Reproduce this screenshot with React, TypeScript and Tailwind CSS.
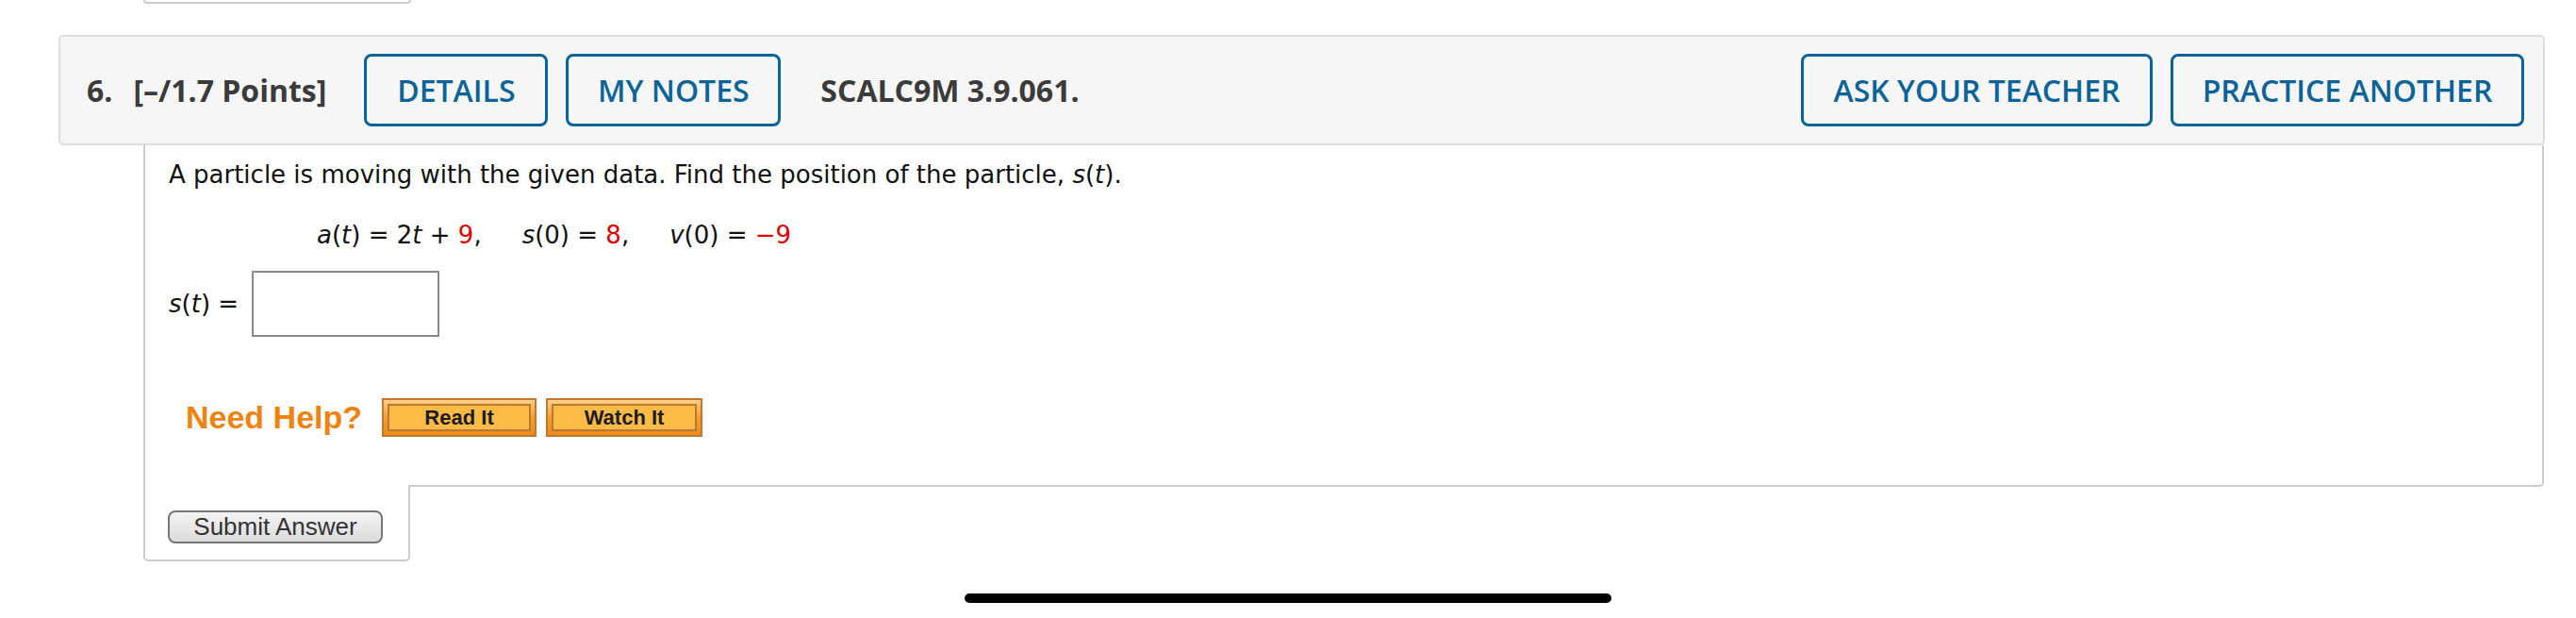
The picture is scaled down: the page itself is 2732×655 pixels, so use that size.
import React from "react";

const headerBtn =
    "h-[77px] border-[3px] border-[#0a6399] rounded-[8px] text-[#0a6399] font-semibold text-[32px] flex items-center justify-center bg-[#f6f6f6]";

function HelpButton({ label, width }: { label: string; width: string }) {
    return (
        <div className={`${width} h-[41px] border-2 border-[#c4782c] bg-gradient-to-b from-[#fcd08a] via-[#f59d2c] to-[#ef8a1c] p-[4px]`}>
            <div className="w-full h-full border-2 border-[#b87a30] bg-[#fcbb47] flex items-center justify-center">
                <span className="font-['Liberation_Sans',Arial,sans-serif] font-bold text-[22px] text-[#1c1c1c] leading-none">
                    {label}
                </span>
            </div>
        </div>
    );
}

export default function App() {
    return (
        <div className="w-[2732px] h-[655px] bg-white relative overflow-hidden font-['Open_Sans',sans-serif]">
            {/* bottom of the previous question */}
            <div className="ml-[152px] w-[284px] h-[4px] border-x-2 border-b-2 border-[#cccccc] rounded-b-[4px]" />

            {/* question header */}
            <div className="mt-[33px] ml-[62px] w-[2637px] h-[117px] bg-[#f6f6f6] border-2 border-[#dddddd] rounded-[5px] flex items-center pl-[28px] pr-[20px] text-[#3b3b3b]">
                <span className="font-bold text-[32px]">6.</span>
                <span className="ml-[22px] font-bold text-[32px]">[–/1.7 Points]</span>
                <div className={`${headerBtn} ml-[40px] w-[195px]`}>DETAILS</div>
                <div className={`${headerBtn} ml-[19px] w-[228px]`}>MY NOTES</div>
                <span className="ml-[42px] font-bold text-[32px]">SCALC9M 3.9.061.</span>
                <div className="flex-1" />
                <div className={`${headerBtn} w-[373px]`}>ASK YOUR TEACHER</div>
                <div className={`${headerBtn} ml-[19px] w-[375px]`}>PRACTICE ANOTHER</div>
            </div>

            {/* question body */}
            <div className="ml-[152px] w-[2546px]">
                <div className="border-x-2 border-b-2 border-[#cccccc] rounded-br-[5px] pl-[25px] pt-[16px] pb-[51px] font-['DejaVu_Sans',Verdana,sans-serif] text-[26px] text-[#111]">
                    <div className="h-[30px] leading-[30px]">
                        A particle is moving with the given data. Find the position of the particle, <i>s</i>(<i>t</i>).
                    </div>
                    <div className="mt-[34px] h-[30px] leading-[30px] pl-[157px] flex">
                        <span>
                            <i>a</i>(<i>t</i>) = 2<i>t</i> + <span className="text-[#e00000]">9</span>,
                        </span>
                        <span className="ml-[43px]">
                            <i>s</i>(0) = <span className="text-[#e00000]">8</span>,
                        </span>
                        <span className="ml-[43px]">
                            <i>v</i>(0) = <span className="text-[#e00000]">−9</span>
                        </span>
                    </div>
                    <div className="mt-[23px] h-[70px] flex items-center">
                        <span>
                            <i>s</i>(<i>t</i>) =
                        </span>
                        <div className="ml-[14px] w-[199px] h-[70px] border-2 border-[#8a8a8a] bg-white" />
                    </div>
                    <div className="mt-[65px] h-[41px] flex items-center pl-[18px]">
                        <span className="font-['Liberation_Sans',Arial,sans-serif] font-bold text-[34px] text-[#ee8310] mr-[21px]">
                            Need Help?
                        </span>
                        <HelpButton label="Read It" width="w-[164px]" />
                        <div className="w-[10px]" />
                        <HelpButton label="Watch It" width="w-[166px]" />
                    </div>
                </div>
                <div className="-mt-[2px] w-[283px] h-[81px] bg-white border-x-2 border-b-2 border-[#cccccc] rounded-b-[5px] pl-[24px] pt-[27px]">
                    <div className="w-[228px] h-[35px] rounded-[8px] border-2 border-[#777777] bg-gradient-to-b from-[#f4f4f4] to-[#dcdcdc] flex items-center justify-center font-['Liberation_Sans',Arial,sans-serif] text-[26px] text-[#333]">
                        Submit Answer
                    </div>
                </div>
            </div>

            {/* home indicator */}
            <div className="absolute left-[1023px] top-[629px] w-[686px] h-[10px] rounded-full bg-black" />
        </div>
    );
}
